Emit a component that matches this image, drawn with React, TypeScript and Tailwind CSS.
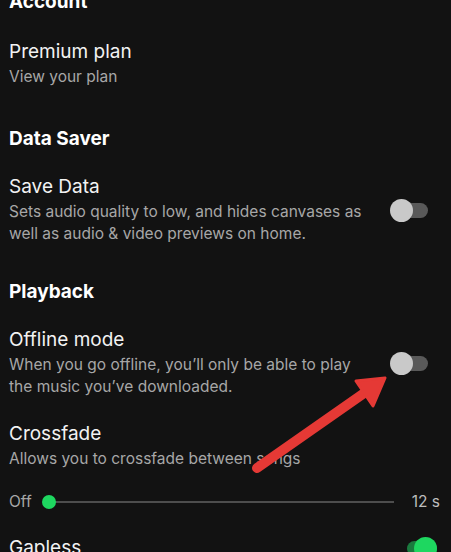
import React from "react";

const font = { fontFamily: "Inter, 'Noto Sans', sans-serif" };

function Toggle({ on = false, className = "" }: { on?: boolean; className?: string }) {
  return (
    <div className={`relative h-[23px] w-[38px] shrink-0 ${className}`}>
      <div
        className={`absolute right-0 top-[4px] h-[15px] w-[30px] rounded-full ${
          on ? "bg-[#1a7a3e]" : "bg-[#595959]"
        }`}
      />
      <div
        className={`absolute top-0 h-[23px] w-[23px] rounded-full ${
          on ? "right-0 bg-[#1ed760]" : "left-0 bg-[#c9c9c9]"
        }`}
      />
    </div>
  );
}

function Heading({ children, className = "" }: { children: React.ReactNode; className?: string }) {
  return <h2 className={`text-[19px] font-bold leading-[24px] text-white ${className}`}>{children}</h2>;
}

function Item({
  title,
  desc,
  toggle,
  className = "",
}: {
  title: string;
  desc?: string;
  toggle?: React.ReactNode;
  className?: string;
}) {
  return (
    <div className={`flex items-center justify-between ${className}`}>
      <div className="flex flex-col gap-[2px]">
        <p className="text-[19px] leading-[24px] text-[#f2f2f2]">{title}</p>
        {desc && <p className="max-w-[360px] text-[15.5px] leading-[22px] text-[#a7a7a7]">{desc}</p>}
      </div>
      {toggle}
    </div>
  );
}

export default function App() {
  return (
    <div className="relative h-[552px] w-[451px] overflow-hidden bg-[#121212]" style={font}>
      <div className="-mt-[10px] flex flex-col pl-[9px] pr-[23px]">
        <Heading>Account</Heading>
        <Item className="mt-[26px]" title="Premium plan" desc="View your plan" />

        <Heading className="mt-[39px]">Data Saver</Heading>
        <Item
          className="mt-[24px]"
          title="Save Data"
          desc="Sets audio quality to low, and hides canvases as well as audio & video previews on home."
          toggle={<Toggle />}
        />

        <Heading className="mt-[35px]">Playback</Heading>
        <Item
          className="mt-[24px]"
          title="Offline mode"
          desc="When you go offline, you’ll only be able to play the music you’ve downloaded."
          toggle={<Toggle />}
        />

        <Item className="mt-[24px]" title="Crossfade" desc="Allows you to crossfade between songs" />

        <div className="mr-[-12px] mt-[22px] flex h-[20px] items-center gap-[12px]">
          <span className="w-[28px] text-[15.5px] text-[#a7a7a7]">Off</span>
          <div className="relative flex h-[20px] flex-1 items-center">
            <div className="h-[2px] w-full bg-[#4d4d4d]" />
            <div className="absolute left-[-7px] h-[14px] w-[14px] rounded-full bg-[#1ed760]" />
          </div>
          <span className="pl-[6px] text-[15.5px] text-[#bdbdbd]">12 s</span>
        </div>

        <Item className="mr-[-9px] mt-[24px]" title="Gapless" toggle={<Toggle on />} />
      </div>

      <svg className="pointer-events-none absolute left-0 top-0" width="451" height="552">
        <line x1="257" y1="468" x2="370" y2="389" stroke="#e53935" strokeWidth="10" strokeLinecap="round" />
        <polygon points="385,378 356,381 373,406" fill="#e53935" stroke="#e53935" strokeWidth="3" strokeLinejoin="round" />
      </svg>
    </div>
  );
}
